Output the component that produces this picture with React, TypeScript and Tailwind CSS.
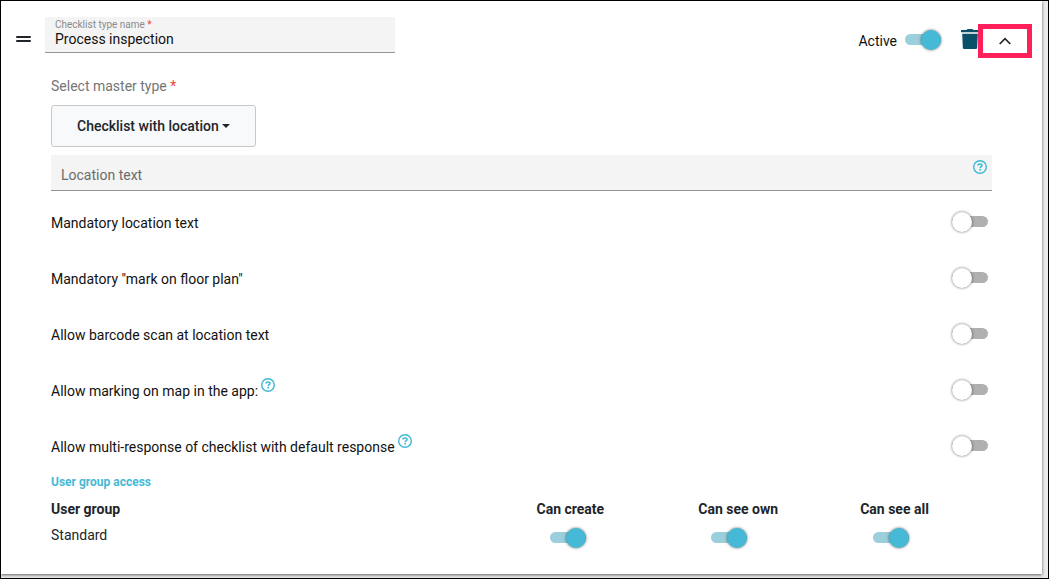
import React, { useState } from 'react';

const HelpIcon = ({ className = '' }: { className?: string }) => (
  <svg viewBox="0 0 14 14" fill="none" className={`w-3.5 h-3.5 shrink-0 text-[#3fb8d6] ${className}`} aria-hidden="true">
    <circle cx="7" cy="7" r="6.3" stroke="currentColor" strokeWidth="1.4" />
    <path d="M5 5.500C5 4.500 5.800 3.900 7 3.900s2 .6 2 1.500C9 6.600 7.200 6.600 7.200 8.200" stroke="currentColor" strokeWidth="1.500" />
    <path d="M6.400 9.100h1.600v1.400H6.400z" fill="currentColor" />
  </svg>
);

type ToggleProps = {
  id: string;
  label?: string;
  defaultOn?: boolean;
};

function Toggle({ id, label, defaultOn = false }: ToggleProps) {
  const [on, setOn] = useState(defaultOn);

  return (
    <input
      id={id}
      type="checkbox"
      role="switch"
      aria-label={label}
      checked={on}
      onChange={e => setOn(e.target.checked)}
      className="relative mb-[3px] block shrink-0 appearance-none w-9 h-[11px] rounded-full cursor-pointer bg-[#b0b0b0] checked:bg-[#9ccfdc] before:absolute before:-top-1 before:left-0 before:w-5 before:h-5 before:rounded-full before:bg-white before:shadow-[0_0_3px_rgba(0,0,0,0.6)] checked:before:left-4 checked:before:bg-[#45b9d6]"
    />
  );
}

const settings = [
  { id: 'mandatory-location', label: 'Mandatory location text' },
  { id: 'mandatory-mark', label: 'Mandatory "mark on floor plan"' },
  { id: 'barcode', label: 'Allow barcode scan at location text' },
  { id: 'map', label: 'Allow marking on map in the app:', help: true },
  { id: 'multi-response', label: 'Allow multi-response of checklist with default response', help: true },
];

const permissions = ['Can create', 'Can see own', 'Can see all'];

export default function App() {
  const [name, setName] = useState('Process inspection');

  return (
    <div className="min-h-screen border border-black bg-[#ebebeb] pr-1.5 pb-1 font-['Roboto',sans-serif] text-sm text-[#111]">
      <section className="bg-white pb-[26px] shadow-[0_1px_3px_rgba(0,0,0,0.6)]">
        <header className="flex items-start pt-4 pl-[15px] pr-2.5">
          <button type="button" aria-label="Reorder" className="mt-[19px] flex flex-col gap-0.5">
            <span className="w-[15px] h-0.5 rounded-full bg-[#212529]" />
            <span className="w-[15px] h-0.5 rounded-full bg-[#212529]" />
          </button>

          <div className="ml-3.5 w-[350px] h-9 bg-[#f4f4f4] border-b border-[#949494] px-2.5">
            <label htmlFor="type-name" className="block pt-0.5 text-[10px] leading-3 text-[#8a8a8a]">
              Checklist type name <span className="text-[#f44336]">*</span>
            </label>
            <input
              id="type-name"
              value={name}
              onChange={e => setName(e.target.value)}
              className="block w-full h-4 bg-transparent outline-none"
            />
          </div>

          <div className="ml-auto mt-[7px] flex h-[34px] items-center">
            <label htmlFor="active" className="mr-2">Active</label>
            <Toggle id="active" defaultOn />
            <button type="button" aria-label="Delete" className="ml-5 w-[17px]">
              <svg viewBox="0 0 18 20" className="block w-[18px] h-5 mb-1 text-[#0b5069]" fill="currentColor" aria-hidden="true">
                <path d="M0 1h5.500L6.500 0h5l1 1H18v2.200H0z" />
                <path d="M1.200 4.800h15.600l-.6 13.600c0 .9-.8 1.600-1.800 1.600H3.600c-1 0-1.800-.7-1.800-1.600z" />
              </svg>
            </button>
            <button type="button" aria-label="Collapse" className="relative flex w-[54px] h-[34px] items-center justify-center border-[5px] border-[#ff1f5a] bg-white">
              <svg viewBox="0 0 12 8" className="w-3 h-2" fill="none" stroke="#212529" strokeWidth="1.7" aria-hidden="true">
                <path d="M.7 7 6 1.700 11.300 7" />
              </svg>
            </button>
          </div>
        </header>

        <div className="px-[50px]">
          <label htmlFor="master-type" className="mt-[18px] block leading-5 text-[#757575]">
            Select master type <span className="text-[#f44336]">*</span>
          </label>
          <div className="relative mt-[9px] w-[205px]">
            <select
              id="master-type"
              className="block w-full h-[42px] appearance-none rounded-[3px] border border-[#c8c8c8] bg-[#f8f9fb] pl-[25px] font-medium text-[#212529]"
            >
              <option>Checklist with location</option>
            </select>
            <svg viewBox="0 0 8 4" className="pointer-events-none absolute right-[26px] top-[19px] w-2 h-1" fill="#212529" aria-hidden="true">
              <path d="M0 0h8L4 4z" />
            </svg>
          </div>

          <div className="mt-2 flex h-9 items-start bg-[#f4f4f4] border-b border-[#949494] pl-2.5 pr-[5px]">
            <input
              aria-label="Location text"
              placeholder="Location text"
              className="h-full flex-1 bg-transparent pt-1 outline-none placeholder:text-[#6b6b6b]"
            />
            <HelpIcon className="mt-[5px]" />
          </div>

          <div className="mt-1">
            {settings.map(s => (
              <div key={s.id} className="flex h-14 items-center justify-between pr-1">
                <div className="flex">
                  <label htmlFor={s.id}>{s.label}</label>
                  {s.help && <HelpIcon className="ml-[3px] -mt-[3px]" />}
                </div>
                <Toggle id={s.id} />
              </div>
            ))}
          </div>
        </div>

        <div className="pl-[50px] pr-5">
          <h2 className="text-xs leading-[14px] font-bold text-[#45b9d6]">User group access</h2>
          <table className="mt-[7px] w-full table-fixed text-left text-[#212529]">
            <thead>
              <tr className="h-[26px]">
                <th className="w-1/2 font-bold">User group</th>
                {permissions.map(p => (
                  <th key={p} className="w-1/6 font-bold">{p}</th>
                ))}
              </tr>
            </thead>
            <tbody>
              <tr className="h-[26px]">
                <td>Standard</td>
                {permissions.map(p => (
                  <td key={p} className="pl-[13px] pt-[7px]">
                    <Toggle id={p} label={`Standard: ${p}`} defaultOn />
                  </td>
                ))}
              </tr>
            </tbody>
          </table>
        </div>
      </section>
    </div>
  );
}
